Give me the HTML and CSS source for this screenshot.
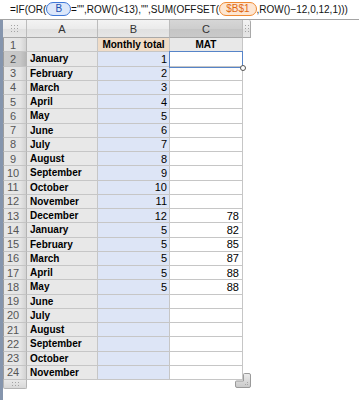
FILE: index.html
```html
<!DOCTYPE html>
<html lang="en">
<head>
  <meta charset="UTF-8">
  <title>MAT sheet</title>
  <link rel="stylesheet" href="styles.css">
</head>
<body>
  <div class="formula">=IF(OR(<span class="ref ref-col">B</span>="",ROW()&lt;13),"",SUM(OFFSET(<span class="ref ref-abs">$B$1</span>,ROW()−12,0,12,1)))</div>

  <div class="main">
    <div class="edge"></div>
    <div class="sheet-wrap">
      <div class="sheet">
        <div class="corner"><span class="dots"></span></div>
        <div class="col-head">A</div>
        <div class="col-head">B</div>
        <div class="col-head col-sel">C</div>
        <div class="col-grip"><span class="dots dots-v"></span></div>

        <div class="row-head">1</div><div class="cell hd"></div><div class="cell hd hd-ref">Monthly total</div><div class="cell hd">MAT</div>
        <div class="row-head row-sel">2</div><div class="cell lbl">January</div><div class="cell num">1</div><div class="cell out sel"></div>
        <div class="row-head">3</div><div class="cell lbl">February</div><div class="cell num">2</div><div class="cell out"></div>
        <div class="row-head">4</div><div class="cell lbl">March</div><div class="cell num">3</div><div class="cell out"></div>
        <div class="row-head">5</div><div class="cell lbl">April</div><div class="cell num">4</div><div class="cell out"></div>
        <div class="row-head">6</div><div class="cell lbl">May</div><div class="cell num">5</div><div class="cell out"></div>
        <div class="row-head">7</div><div class="cell lbl">June</div><div class="cell num">6</div><div class="cell out"></div>
        <div class="row-head">8</div><div class="cell lbl">July</div><div class="cell num">7</div><div class="cell out"></div>
        <div class="row-head">9</div><div class="cell lbl">August</div><div class="cell num">8</div><div class="cell out"></div>
        <div class="row-head">10</div><div class="cell lbl">September</div><div class="cell num">9</div><div class="cell out"></div>
        <div class="row-head">11</div><div class="cell lbl">October</div><div class="cell num">10</div><div class="cell out"></div>
        <div class="row-head">12</div><div class="cell lbl">November</div><div class="cell num">11</div><div class="cell out"></div>
        <div class="row-head">13</div><div class="cell lbl">December</div><div class="cell num">12</div><div class="cell out">78</div>
        <div class="row-head">14</div><div class="cell lbl">January</div><div class="cell num">5</div><div class="cell out">82</div>
        <div class="row-head">15</div><div class="cell lbl">February</div><div class="cell num">5</div><div class="cell out">85</div>
        <div class="row-head">16</div><div class="cell lbl">March</div><div class="cell num">5</div><div class="cell out">87</div>
        <div class="row-head">17</div><div class="cell lbl">April</div><div class="cell num">5</div><div class="cell out">88</div>
        <div class="row-head">18</div><div class="cell lbl">May</div><div class="cell num">5</div><div class="cell out">88</div>
        <div class="row-head">19</div><div class="cell lbl">June</div><div class="cell num"></div><div class="cell out"></div>
        <div class="row-head">20</div><div class="cell lbl">July</div><div class="cell num"></div><div class="cell out"></div>
        <div class="row-head">21</div><div class="cell lbl">August</div><div class="cell num"></div><div class="cell out"></div>
        <div class="row-head">22</div><div class="cell lbl">September</div><div class="cell num"></div><div class="cell out"></div>
        <div class="row-head">23</div><div class="cell lbl">October</div><div class="cell num"></div><div class="cell out"></div>
        <div class="row-head">24</div><div class="cell lbl">November</div><div class="cell num"></div><div class="cell out"></div>
      </div>

      <div class="sheet-foot">
        <div class="row-grip"><span class="dots dots-h"></span></div>
        <svg class="resize" width="16" height="15" viewBox="0 0 16 15">
          <defs>
            <linearGradient id="rg" x1="0" y1="0" x2="0" y2="1">
              <stop offset="0" stop-color="#ececec"/>
              <stop offset="1" stop-color="#c9c9c9"/>
            </linearGradient>
          </defs>
          <path d="M9.5 0.5H14a1.5 1.5 0 0 1 1.5 1.5V13a1.5 1.5 0 0 1-1.5 1.5H2A1.5 1.5 0 0 1 0.5 13V9A1 1 0 0 1 1.5 8H8.5V1.5A1 1 0 0 1 9.5 0.5Z" fill="url(#rg)" stroke="#9a9a9a"/>
          <g fill="#a8a8a8">
            <rect x="12" y="9" width="1" height="1"/>
            <rect x="12" y="11" width="1" height="1"/>
            <rect x="10" y="11" width="1" height="1"/>
          </g>
        </svg>
      </div>
    </div>
  </div>
</body>
</html>
```

FILE: styles.css
```css
body {
  margin: 0;
  font-family: "Liberation Sans", Arial, sans-serif;
  background: #fff;
  color: #000;
  height: 100vh;
  display: flex;
  flex-direction: column;
  overflow: hidden;
}
.formula {
  height: 19px;
  border-bottom: 1px solid #a4a4a4;
  padding-left: 10px;
  font-size: 10px;
  line-height: 19px;
  white-space: nowrap;
  color: #111;
}
.ref {
  display: inline-block;
  height: 12px;
  line-height: 12px;
  border-radius: 7px;
  vertical-align: middle;
  margin-top: -2px;
}
.ref-col {
  padding: 0 8px;
  border: 1px solid #3f78d8;
  background: #dce7fa;
  color: #1d4fb0;
}
.ref-abs {
  padding: 0 6px;
  border: 1px solid #f08a32;
  background: #fde6d2;
  color: #e06a14;
}
.main {
  flex: 1;
  display: flex;
}
.edge {
  width: 3px;
  background: #8595ad;
}
.sheet-wrap {
  display: flex;
  flex-direction: column;
  width: 248px;
}
.sheet {
  display: grid;
  grid-template-columns: 24px 71px 72px 73px 8px;
  grid-template-rows: 18px repeat(24, 14.25px);
}
.corner, .col-head, .col-grip {
  background: linear-gradient(#f3f3f3 0, #ebebeb 50%, #e0e0e0 51%, #e6e6e6 100%);
  border-right: 1px solid #bcbcbc;
  border-bottom: 1px solid #a9a9a9;
  box-sizing: border-box;
  display: flex;
  align-items: center;
  justify-content: center;
  font-size: 11px;
  color: #333;
}
.col-sel {
  background: linear-gradient(#d6d6d6 0, #cecece 50%, #c4c4c4 51%, #c9c9c9 100%);
}
.col-grip {
  border-right: 1px solid #a9a9a9;
  border-radius: 0 2px 0 0;
}
.dots {
  display: block;
  width: 9px;
  height: 9px;
  background: radial-gradient(circle, #a3a3a3 0.7px, transparent 1px) 0 0 / 3px 3px;
}
.dots-v {
  width: 6px;
}
.dots-h {
  height: 6px;
  width: 9px;
}
.row-head {
  grid-column: 1;
  background: linear-gradient(to right, #e7e7e7 0, #e4e4e4 75%, #d2d2d2 100%);
  border-left: 1px solid #9c9c9c;
  border-right: 1px solid #b4b4b4;
  border-bottom: 1px solid #c4c4c4;
  box-sizing: border-box;
  display: flex;
  align-items: center;
  justify-content: center;
  padding-right: 4px;
  font-size: 11px;
  color: #555;
}
.row-sel {
  background: linear-gradient(to right, #cbcbcb 0, #c6c6c6 75%, #b6b6b6 100%);
}
.cell {
  border-right: 1px solid #c6c6c6;
  border-bottom: 1px solid #c6c6c6;
  box-sizing: border-box;
  display: flex;
  align-items: center;
  white-space: nowrap;
  overflow: visible;
}
.hd {
  background: #e8e8e8;
  justify-content: center;
  font-weight: bold;
  font-size: 10px;
}
.hd-ref {
  background: #f0dcc7;
}
.lbl {
  background: #e8e8e8;
  padding-left: 3px;
  font-weight: bold;
  font-size: 10px;
}
.num {
  background: #dde5f6;
  justify-content: flex-end;
  padding-right: 2px;
  font-size: 11px;
}
.out {
  background: #fff;
  justify-content: flex-end;
  padding-right: 3px;
  font-size: 11px;
}
.sel {
  position: relative;
}
.sel::after {
  content: "";
  position: absolute;
  left: -1px;
  top: -1px;
  right: -1px;
  bottom: -2px;
  border: 1.5px solid #5784c8;
}
.sel::before {
  content: "";
  position: absolute;
  right: -4px;
  bottom: -5px;
  width: 4px;
  height: 4px;
  border: 1px solid #555;
  border-radius: 50%;
  background: #fff;
  z-index: 1;
}
.sheet-foot {
  display: flex;
  justify-content: space-between;
  align-items: flex-start;
}
.row-grip {
  width: 24px;
  height: 9px;
  box-sizing: border-box;
  background: linear-gradient(#e8e8e8, #d8d8d8);
  border: 1px solid #b4b4b4;
  border-top: none;
  border-radius: 0 0 2px 2px;
  display: flex;
  align-items: center;
  justify-content: center;
}
.resize {
  display: block;
  margin-top: -7px;
}
```
